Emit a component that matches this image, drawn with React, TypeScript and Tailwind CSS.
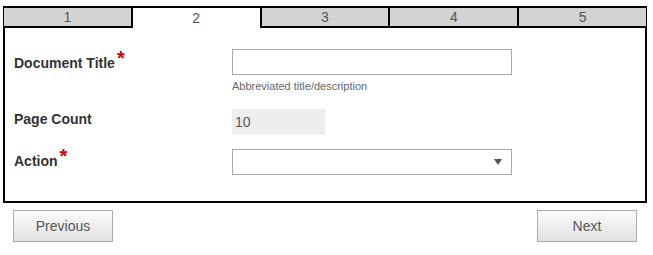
const tabs = ["1", "2", "3", "4", "5"];

function Required() {
  return <span className="relative -top-[3px] ml-[2px] text-[20px] leading-none text-[#cc0000]">*</span>;
}

export default function App() {
  return (
    <div className="h-[255px] w-[653px] bg-white pt-[6px] pl-[3px] font-['Liberation_Sans',Arial,sans-serif]">
      <div className="w-[644px]">
        {/* tabs */}
        <div className="flex">
          {tabs.map((t, i) => {
            const active = i === 1;
            return (
              <div
                key={t}
                className={
                  active
                    ? "flex h-[22px] flex-1 items-center justify-center border-x border-t-2 border-black bg-white text-[14px] text-[#4a5670]"
                    : "flex h-[22px] flex-1 items-center justify-center border-x border-t-2 border-b-2 border-black bg-[#d3d3d3] text-[14px] text-[#555]"
                }
              >
                {t}
              </div>
            );
          })}
        </div>

        {/* form body */}
        <div className="h-[175px] border-x-2 border-b-2 border-black pt-[21px] pl-[8px]">
          <div className="flex">
            <div className="w-[219px] pt-[2px] pl-[1px] text-[14px] font-bold text-[#333]">
              Document Title
              <Required />
            </div>
            <div>
              <input
                type="text"
                className="block h-[26px] w-[280px] border border-[#a9a9a9] px-[4px] text-[14px] outline-none"
              />
              <div className="mt-[5px] text-[11px] leading-[13px] text-[#666]">Abbreviated title/description</div>
            </div>
          </div>

          <div className="mt-[16px] flex">
            <div className="w-[219px] pl-[1px] text-[14px] font-bold text-[#333]">Page Count</div>
            <div className="flex h-[26px] w-[93px] items-center bg-[#eeeeee] px-[3px] text-[14px] text-[#555]">10</div>
          </div>

          <div className="mt-[14px] flex">
            <div className="w-[219px] pl-[1px] text-[14px] font-bold text-[#333]">
              Action
              <Required />
            </div>
            <div className="flex h-[26px] w-[280px] items-center justify-end border border-[#a9a9a9] pr-[9px]">
              <svg width="8" height="6" viewBox="0 0 8 6">
                <path d="M0 0 L8 0 L4 6 Z" fill="#555" />
              </svg>
            </div>
          </div>
        </div>
      </div>

      {/* buttons */}
      <div className="mt-[7px] flex w-[644px] justify-between pl-[10px] pr-[10px]">
        <button className="h-[32px] w-[100px] border border-[#adadad] bg-gradient-to-b from-[#fafafa] to-[#e2e2e2] text-[14px] text-[#555]">
          Previous
        </button>
        <button className="h-[32px] w-[100px] border border-[#adadad] bg-gradient-to-b from-[#fafafa] to-[#e2e2e2] text-[14px] text-[#555]">
          Next
        </button>
      </div>
    </div>
  );
}
